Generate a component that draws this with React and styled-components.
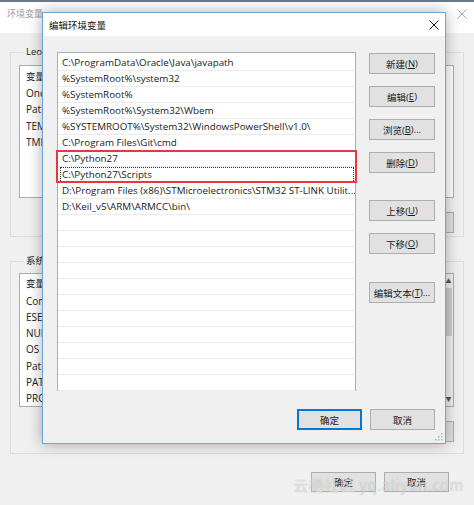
import React from 'react';
import styled, { createGlobalStyle } from 'styled-components';

const GlobalStyle = createGlobalStyle`
  html, body {
    margin: 0;
    padding: 0;
    background: #f0f0f0;
  }
  body {
    font-family: "Open Sans", "Noto Sans CJK SC", sans-serif;
    font-size: 10px;
    color: #000;
  }
`;

const Screen = styled.div`
  position: relative;
  width: 474px;
  height: 505px;
  overflow: hidden;
  background: #f0f0f0;
  display: flex;
  flex-direction: column;
`;

/* ---------- back window: 环境变量 ---------- */

const BackTitleBar = styled.div`
  height: 33px;
  box-sizing: border-box;
  border-top: 2px solid #6b7a8c;
  background: #fff;
  display: flex;
  align-items: flex-start;
  justify-content: space-between;
  padding: 5px 7px 0 7px;
  color: #9c9c9c;
  font-size: 9px;
  line-height: 14px;
`;

const CloseGlyph = styled.svg`
  width: 10px;
  height: 10px;
  margin-top: ${p => p.$top || 0}px;
  stroke: ${p => p.$color};
  stroke-width: 1;
  flex: none;
`;

const BackBody = styled.div`
  flex: 1;
  display: flex;
  flex-direction: column;
  padding: 12px 10px 0 10px;
`;

const GroupBox = styled.fieldset`
  margin: ${p => p.$top || 0}px 0 0 0;
  padding: ${p => p.$padTop}px 9px ${p => p.$padBottom}px 8px;
  border: 1px solid #dcdcdc;
  min-width: 0;
  display: flex;
  flex-direction: column;
`;

const Legend = styled.legend`
  margin-left: 5px;
  padding: 0 2px;
  line-height: 14px;
  font-size: 9.5px;
  color: #222;
`;

const BackList = styled.div`
  height: ${p => p.$height}px;
  box-sizing: border-box;
  background: #fff;
  border: 1px solid #adadad;
  display: flex;
  overflow: hidden;
`;

const BackListCols = styled.div`
  flex: 1;
  min-width: 0;
  display: flex;
  flex-direction: column;
`;

const BackHeader = styled.div`
  height: 19px;
  display: grid;
  grid-template-columns: 150px 1fr;
  align-items: center;
  padding-left: 6px;
  font-size: 9.5px;
  color: #222;
`;

const BackRow = styled.div`
  height: 16.3px;
  display: grid;
  grid-template-columns: 150px 1fr;
  align-items: center;
  padding-left: 6px;
  white-space: nowrap;
  color: #222;
`;

const Cell = styled.span`
  overflow: hidden;
  text-overflow: ellipsis;
  padding-right: 6px;
`;

const ScrollBar = styled.div`
  width: 9px;
  background: #f0f0f0;
  display: flex;
  flex-direction: column;
  align-items: center;
`;

const ScrollArrow = styled.div`
  height: 14px;
  font-size: 6px;
  line-height: 14px;
  color: #555;
`;

const ScrollThumb = styled.div`
  width: 7px;
  height: 48px;
  background: #cdcdcd;
`;

const ScrollTrack = styled.div`
  flex: 1;
`;

const ButtonRow = styled.div`
  display: flex;
  justify-content: flex-end;
  gap: 8px;
  margin-top: ${p => p.$top || 0}px;
`;

const WinButton = styled.button`
  box-sizing: border-box;
  width: ${p => p.$w || 66}px;
  height: ${p => p.$h || 21}px;
  margin: ${p => p.$top || 0}px 0 0 0;
  padding: 0;
  background: #e1e1e1;
  border: 1px solid #adadad;
  box-shadow: ${p => (p.$default ? 'inset 0 0 0 1px #0078d7' : 'none')};
  border-color: ${p => (p.$default ? '#0078d7' : '#adadad')};
  font-family: "Open Sans", "Noto Sans CJK SC", sans-serif;
  font-size: 9.5px;
  color: #1a1a1a;
  white-space: nowrap;
  display: flex;
  align-items: center;
  justify-content: center;

  u {
    text-underline-offset: 1px;
  }
`;

const BottomBar = styled.div`
  display: flex;
  justify-content: flex-end;
  gap: 8px;
  padding: 17px 25px 13px 0;
`;

/* ---------- front dialog: 编辑环境变量 ---------- */

const Dialog = styled.div`
  position: absolute;
  left: 42px;
  top: 12px;
  width: 404px;
  height: 432px;
  box-sizing: border-box;
  border: 1px solid #6ea5dc;
  background: #f0f0f0;
  box-shadow: 0 0 14px rgba(0, 0, 0, 0.32);
  display: flex;
  flex-direction: column;
`;

const DialogTitle = styled.div`
  height: 23px;
  flex: none;
  background: #fff;
  display: flex;
  align-items: center;
  justify-content: space-between;
  padding: 0 6px 0 6px;
  font-size: 9.5px;
  color: #111;
`;

const DialogBody = styled.div`
  flex: 1;
  display: flex;
  flex-direction: column;
  padding: 16px 10px 13px 14px;
  min-height: 0;
`;

const DialogMain = styled.div`
  flex: 1;
  display: flex;
  gap: 13px;
  min-height: 0;
`;

const PathList = styled.div`
  flex: 1;
  min-width: 0;
  background: #fff;
  border: 1px solid #adadad;
  padding-top: 2px;
`;

const PathRow = styled.div`
  height: 15px;
  border-bottom: 1px solid #ececec;
  padding-left: ${p => (p.$focus ? '2px' : '4px')};
  line-height: 15px;
  font-size: 9.8px;
  color: #1a1a1a;
  white-space: nowrap;
  overflow: hidden;
  outline: ${p => (p.$focus ? '1px dotted #333' : 'none')};
  outline-offset: -1px;
  margin: 0 ${p => (p.$focus ? '1px' : '0')} 0 ${p => (p.$focus ? '2px' : '0')};
`;

const Marked = styled.div`
  position: relative;

  &::after {
    content: '';
    position: absolute;
    top: -1px;
    bottom: 0;
    left: -2px;
    right: -2px;
    border: 2px solid #e8383d;
    pointer-events: none;
  }
`;

const SideButtons = styled.div`
  width: 66px;
  display: flex;
  flex-direction: column;
`;

const Grip = styled.svg`
  position: absolute;
  right: 2px;
  bottom: 2px;
  width: 8px;
  height: 8px;
  fill: #b5b5b5;
`;

const Watermark = styled.div`
  position: absolute;
  right: 10px;
  bottom: 10px;
  font-family: "Noto Sans CJK SC", "Open Sans", sans-serif;
  font-size: 15px;
  letter-spacing: 0.5px;
  color: rgba(255, 255, 255, 0.55);
  text-shadow: 0 0 1px rgba(120, 120, 120, 0.55);
  pointer-events: none;
`;

const paths = [
  'C:\\ProgramData\\Oracle\\Java\\javapath',
  '%SystemRoot%\\system32',
  '%SystemRoot%',
  '%SystemRoot%\\System32\\Wbem',
  '%SYSTEMROOT%\\System32\\WindowsPowerShell\\v1.0\\',
  'C:\\Program Files\\Git\\cmd',
  'C:\\Python27',
  'C:\\Python27\\Scripts',
  'D:\\Program Files (x86)\\STMicroelectronics\\STM32 ST-LINK Utilit...',
  'D:\\Keil_v5\\ARM\\ARMCC\\bin\\',
];

const userVars = [
  ['OneDrive', 'C:\\Users\\Leon\\OneDrive'],
  ['Path', 'C:\\Users\\Leon\\AppData\\Local\\Microsoft\\WindowsApps;'],
  ['TEMP', '%USERPROFILE%\\AppData\\Local\\Temp'],
  ['TMP', '%USERPROFILE%\\AppData\\Local\\Temp'],
];

const systemVars = [
  ['ComSpec', 'C:\\WINDOWS\\system32\\cmd.exe'],
  ['ESET_OPTIONS', ''],
  ['NUMBER_OF_PROCESSORS', '4'],
  ['OS', 'Windows_NT'],
  ['Path', 'C:\\ProgramData\\Oracle\\Java\\javapath;%SystemRoot%\\system32;'],
  ['PATHEXT', '.COM;.EXE;.BAT;.CMD;.VBS;.VBE;.JS;.JSE;.WSF;.WSH;.MSC'],
  ['PROCESSOR_ARCHITECTURE', 'AMD64'],
];

const Cross = ({ color, top }) => (
  <CloseGlyph viewBox="0 0 10 10" $color={color} $top={top}>
    <line x1="0.5" y1="0.5" x2="9.5" y2="9.5" />
    <line x1="9.5" y1="0.5" x2="0.5" y2="9.5" />
  </CloseGlyph>
);

const VarList = ({ items, height, scroll }) => (
  <BackList $height={height}>
    <BackListCols>
      <BackHeader>
        <Cell>变量</Cell>
        <Cell>值</Cell>
      </BackHeader>
      {items.map(([k, v]) => (
        <BackRow key={k}>
          <Cell>{k}</Cell>
          <Cell>{v}</Cell>
        </BackRow>
      ))}
    </BackListCols>
    {scroll && (
      <ScrollBar>
        <ScrollArrow>▲</ScrollArrow>
        <ScrollThumb />
        <ScrollTrack />
        <ScrollArrow>▼</ScrollArrow>
      </ScrollBar>
    )}
  </BackList>
);

export default function App() {
  const emptyRows = Array.from({ length: 11 });

  return (
    <>
      <GlobalStyle />
      <Screen>
        <BackTitleBar>
          <span>环境变量</span>
          <Cross color="#a8a8a8" top={2} />
        </BackTitleBar>

        <BackBody>
          <GroupBox $padTop={6} $padBottom={3}>
            <Legend>Leon 的用户变量(<u>U</u>)</Legend>
            <VarList items={userVars} height={133} />
            <ButtonRow $top={14}>
              <WinButton>新建(<u>N</u>)...</WinButton>
              <WinButton>编辑(<u>E</u>)...</WinButton>
              <WinButton>删除(<u>D</u>)</WinButton>
            </ButtonRow>
          </GroupBox>

          <GroupBox $top={17} $padTop={5} $padBottom={11}>
            <Legend>系统变量(<u>S</u>)</Legend>
            <VarList items={systemVars} height={134} scroll />
            <ButtonRow $top={14}>
              <WinButton>新建(<u>W</u>)...</WinButton>
              <WinButton>编辑(<u>I</u>)...</WinButton>
              <WinButton>删除(<u>L</u>)</WinButton>
            </ButtonRow>
          </GroupBox>
        </BackBody>

        <BottomBar>
          <WinButton $w={65} $h={20}>确定</WinButton>
          <WinButton $w={65} $h={20}>取消</WinButton>
        </BottomBar>

        <Dialog>
          <DialogTitle>
            <span>编辑环境变量</span>
            <Cross color="#111" />
          </DialogTitle>
          <DialogBody>
            <DialogMain>
              <PathList>
                {paths.slice(0, 6).map(p => (
                  <PathRow key={p}>{p}</PathRow>
                ))}
                <Marked>
                  <PathRow>{paths[6]}</PathRow>
                  <PathRow $focus>{paths[7]}</PathRow>
                </Marked>
                {paths.slice(8).map(p => (
                  <PathRow key={p}>{p}</PathRow>
                ))}
                {emptyRows.map((_, i) => (
                  <PathRow key={'e' + i} />
                ))}
              </PathList>
              <SideButtons>
                <WinButton $top={1}>新建(<u>N</u>)</WinButton>
                <WinButton $top={12}>编辑(<u>E</u>)</WinButton>
                <WinButton $top={12}>浏览(<u>B</u>)...</WinButton>
                <WinButton $top={12}>删除(<u>D</u>)</WinButton>
                <WinButton $top={27}>上移(<u>U</u>)</WinButton>
                <WinButton $top={12}>下移(<u>O</u>)</WinButton>
                <WinButton $top={28}>编辑文本(<u>T</u>)...</WinButton>
              </SideButtons>
            </DialogMain>
            <ButtonRow $top={18}>
              <WinButton $w={65} $default>确定</WinButton>
              <WinButton $w={65}>取消</WinButton>
            </ButtonRow>
          </DialogBody>
          <Grip viewBox="0 0 8 8">
            <rect x="6" y="0" width="1.5" height="1.5" />
            <rect x="3" y="3" width="1.5" height="1.5" />
            <rect x="6" y="3" width="1.5" height="1.5" />
            <rect x="0" y="6" width="1.5" height="1.5" />
            <rect x="3" y="6" width="1.5" height="1.5" />
            <rect x="6" y="6" width="1.5" height="1.5" />
          </Grip>
        </Dialog>

        <Watermark>云栖社区 yq.aliyun.com</Watermark>
      </Screen>
    </>
  );
}
